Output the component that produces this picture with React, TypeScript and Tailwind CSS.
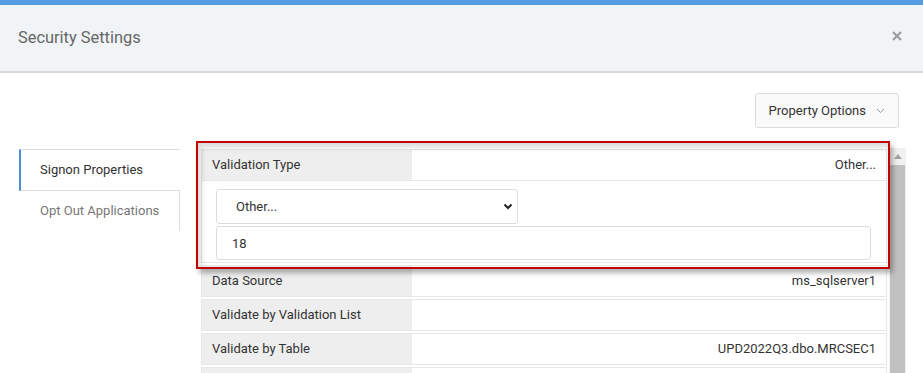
import React from "react";

const rows = [
  { label: "Data Source", value: "ms_sqlserver1" },
  { label: "Validate by Validation List", value: "" },
  { label: "Validate by Table", value: "UPD2022Q3.dbo.MRCSEC1" },
  { label: "", value: "" },
];

function PropRow({ label, value }: { label: string; value: string }) {
  return (
    <div className="flex h-[32px] shrink-0 border border-[#e6e6e6] text-[13px] text-[#333]">
      <div className="flex w-[210px] items-center bg-[#eeeeee] pl-[10px]">{label}</div>
      <div className="flex flex-1 items-center justify-end bg-white pr-[10px]">{value}</div>
    </div>
  );
}

export default function App() {
  return (
    <div
      className="h-[373px] w-[923px] overflow-hidden bg-white"
      style={{ fontFamily: "Roboto, 'Liberation Sans', sans-serif" }}
    >
      <div className="h-[5px] bg-[#559be1]" />
      <header className="flex h-[68px] items-center justify-between border-b-2 border-[#d9d9d9] bg-[#f1f4f7] pl-[18px] pr-[21px]">
        <h1 className="text-[16.4px] text-[#666]">Security Settings</h1>
        <svg width="10" height="10" viewBox="0 0 10 10" className="mb-[4px]">
          <path d="M1 1L9 9M9 1L1 9" stroke="#9a9a9a" strokeWidth="2" />
        </svg>
      </header>

      <div className="pt-[20px]">
        <div className="flex justify-end pr-[24px]">
          <button className="flex h-[35px] items-center gap-[10px] rounded-[3px] border border-[#dcdcdc] bg-[#fafafa] pl-[13px] pr-[13px] text-[13px] text-[#333]">
            Property Options
            <svg width="9" height="6" viewBox="0 0 9 6">
              <path d="M1 1L4.5 4.5L8 1" fill="none" stroke="#999" strokeWidth="1" />
            </svg>
          </button>
        </div>

        <div className="mt-[20px] flex">
          <nav className="ml-[19px] w-[161px] pt-[1px] text-[13px]">
            <div className="flex h-[42px] items-center border-t border-b border-l-2 border-[#dddddd] border-l-[#4a8fd8] pl-[19px] text-[#333]">
              Signon Properties
            </div>
            <div className="flex h-[40px] items-center border-r border-[#dddddd] pl-[21px] text-[#777]">
              Opt Out Applications
            </div>
          </nav>

          <div className="ml-[21px] flex flex-1">
            <div className="flex w-[686px] flex-col gap-[2px] pt-[1px]">
              <div className="relative">
                <PropRow label="Validation Type" value="Other..." />
                <div className="h-[82px] border-x border-b border-[#e6e6e6] bg-white pl-[14px] pr-[15px] pt-[8px]">
                  <div className="relative w-[302px]">
                    <select className="h-[35px] w-full appearance-none rounded-[3px] border border-[#dddddd] bg-white pl-[19px] text-[13px] text-[#333] outline-none">
                      <option>Other...</option>
                    </select>
                    <svg
                      width="10"
                      height="7"
                      viewBox="0 0 10 7"
                      className="pointer-events-none absolute right-[5px] top-[14px]"
                    >
                      <path d="M1.5 1.5L5 5L8.5 1.5" fill="none" stroke="#222" strokeWidth="2" />
                    </svg>
                  </div>
                  <input
                    readOnly
                    value="18"
                    className="mt-[2px] h-[34px] w-full rounded-[3px] border border-[#dddddd] pl-[15px] text-[13px] text-[#333] outline-none"
                  />
                </div>
                <div className="pointer-events-none absolute -bottom-[6px] -left-[5px] -right-[3px] -top-[8px] border-2 border-[#c40000] shadow-[3px_4px_5px_rgba(0,0,0,0.3),inset_3px_4px_6px_rgba(0,0,0,0.16)]" />
              </div>
              {rows.map((r, i) => (
                <PropRow key={i} label={r.label} value={r.value} />
              ))}
            </div>

            <div className="ml-[2px] flex w-[17px] flex-col bg-[#f1f1f1]">
              <div className="flex h-[17px] items-center justify-center">
                <svg width="8" height="5" viewBox="0 0 8 5">
                  <path d="M0 5L4 0L8 5Z" fill="#a3a3a3" />
                </svg>
              </div>
              <div className="mx-[1px] flex-1 bg-[#c1c1c1]" />
            </div>
          </div>
        </div>
      </div>
    </div>
  );
}
